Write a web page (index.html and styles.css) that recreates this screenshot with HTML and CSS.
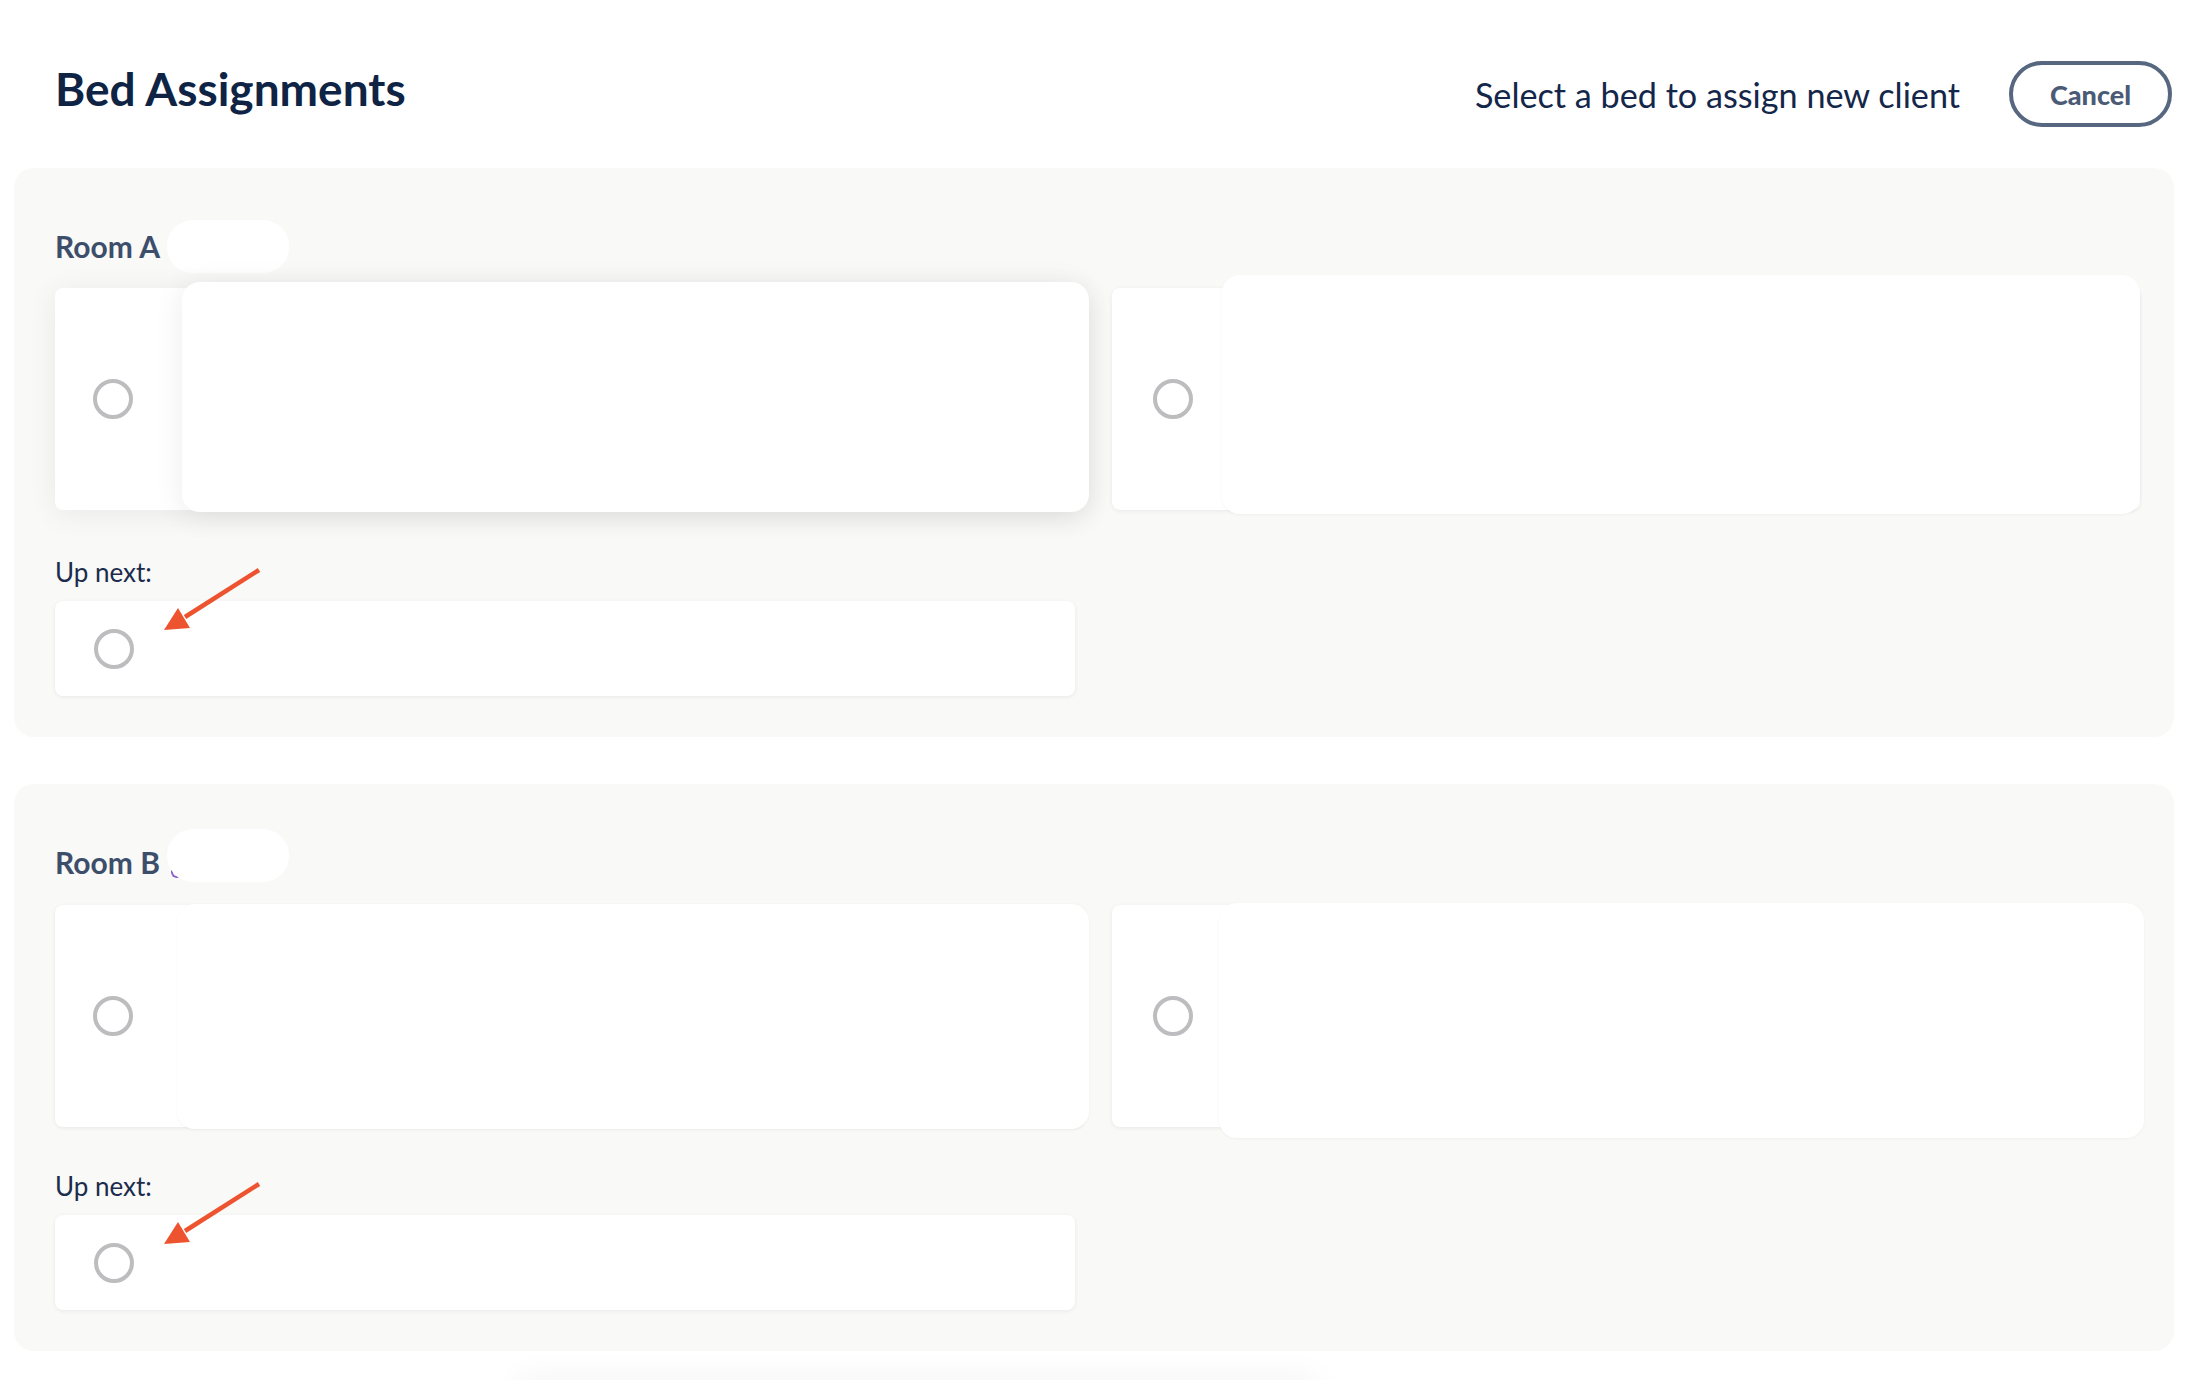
FILE: index.html
```html
<!DOCTYPE html>
<html lang="en">
<head>
  <meta charset="UTF-8" />
  <meta name="viewport" content="width=device-width, initial-scale=1" />
  <title>Bed Assignments</title>
  <link rel="stylesheet" href="styles.css">
</head>
<body>

  <div class="header">
    <h1 class="title">Bed Assignments</h1>
    <div class="actions">
      <span class="hint">Select a bed to assign new client</span>
      <button class="cancel">Cancel</button>
    </div>
  </div>

  <div class="rooms">

    <!-- Room A -->
    <div class="room room-a">
      <h2 class="room-title">Room A<span class="pill"></span></h2>
      <div class="beds">
        <div class="bed bed-active">
          <span class="radio"></span>
          <div class="mask mask-a1"></div>
        </div>
        <div class="bed">
          <span class="radio"></span>
          <div class="mask mask-a2"></div>
        </div>
      </div>
      <div class="next">
        <div class="next-label">Up next:</div>
        <div class="next-card">
          <span class="radio"></span>
          <svg class="arrow" width="120" height="80" viewBox="0 0 120 80">
            <line x1="104" y1="9" x2="30" y2="56" stroke="#ee5330" stroke-width="4.5" />
            <polygon points="9,69 23,47 35,67" fill="#ee5330" />
          </svg>
        </div>
      </div>
    </div>

    <!-- Room B -->
    <div class="room room-b">
      <h2 class="room-title">Room B<span class="mark"></span><span class="pill"></span></h2>
      <div class="beds">
        <div class="bed">
          <span class="radio"></span>
          <div class="mask mask-b1"></div>
        </div>
        <div class="bed">
          <span class="radio"></span>
          <div class="mask mask-b2"></div>
        </div>
      </div>
      <div class="next">
        <div class="next-label">Up next:</div>
        <div class="next-card">
          <span class="radio"></span>
          <svg class="arrow" width="120" height="80" viewBox="0 0 120 80">
            <line x1="104" y1="9" x2="30" y2="56" stroke="#ee5330" stroke-width="4.5" />
            <polygon points="9,69 23,47 35,67" fill="#ee5330" />
          </svg>
        </div>
      </div>
    </div>

  </div>

  <div class="ghost"></div>

</body>
</html>
```

FILE: styles.css
```css
body {
  margin: 0;
  padding: 0;
  font-family: Lato, 'Open Sans', sans-serif;
  background: #fff;
  color: #14274a;
  overflow: hidden;
}

/* === Cabeçalho === */
.header {
  display: flex;
  align-items: center;
  justify-content: space-between;
  padding: 61px 32px 0 55px;
  margin-bottom: 41px;
}

.title {
  margin: 0 0 10px 0;
  font-size: 46px;
  font-weight: 700;
  color: #0f2445;
  line-height: 1.2;
}

.actions {
  display: flex;
  align-items: center;
  gap: 49px;
}

.hint {
  font-size: 34.2px;
  color: #14274a;
}

.cancel {
  width: 163px;
  height: 66px;
  border: 4px solid #56677f;
  border-radius: 33px;
  background: #fff;
  font-family: inherit;
  font-size: 27px;
  font-weight: 900;
  color: #4b5b76;
  cursor: pointer;
}

/* === Quartos === */
.rooms {
  display: flex;
  flex-direction: column;
  gap: 47px;
  padding: 0 30px 0 14px;
}

.room {
  background: #f9f9f8;
  border-radius: 20px;
  padding: 60px 34px 41px 41px;
}

.room-title {
  position: relative;
  margin: 0;
  font-size: 30px;
  line-height: 36px;
  font-weight: 700;
  color: #3d4e6b;
}

.room-title .pill {
  position: absolute;
  left: 112px;
  top: -8px;
  width: 122px;
  height: 53px;
  border-radius: 26px;
  background: #fff;
}

.room-b .room-title .pill {
  top: -15px;
}

/* pedacinho roxo que aparece ao lado do Room B */
.room-title .mark {
  position: absolute;
  left: 116px;
  top: 26px;
  width: 6px;
  height: 6px;
  border-left: 2px solid #8a5cd0;
  border-bottom: 2px solid #8a5cd0;
  border-radius: 0 0 0 6px;
}

.beds {
  display: grid;
  grid-template-columns: 1fr 1fr;
  gap: 28px;
  margin-top: 24px;
}

.room-b .beds {
  margin-top: 25px;
}

.bed {
  position: relative;
  height: 222px;
  background: #fff;
  border-radius: 8px;
  display: flex;
  align-items: center;
  padding-left: 38px;
  box-shadow: 0 1px 4px rgba(0, 0, 0, 0.07);
}

.beds .bed + .bed {
  padding-left: 41px;
}

.bed-active {
  box-shadow: 0 4px 30px rgba(0, 0, 0, 0.07);
}

.radio {
  width: 40px;
  height: 40px;
  box-sizing: border-box;
  border: 4.5px solid #bdbdc0;
  border-radius: 50%;
  background: #fff;
}

/* blocos brancos por cima dos cartões */
.mask {
  position: absolute;
  background: #fff;
  border-radius: 18px;
  box-shadow: 0 1px 3px rgba(0, 0, 0, 0.04);
}

.mask-a1 { left: 127px; top: -6px; right: -5px; bottom: -2px; box-shadow: 0 4px 30px rgba(0, 0, 0, 0.08); }
.mask-a2 { left: 110px; top: -13px; right: 0; bottom: -4px; }
.mask-b1 { left: 122px; top: -1px; right: -5px; bottom: -2px; }
.mask-b2 { left: 107px; top: -2px; right: -4px; bottom: -11px; }

/* === Próximo === */
.next-label {
  margin-top: 46px;
  font-size: 26px;
  line-height: 32px;
  color: #1b2c4c;
}

.room-b .next-label {
  margin-top: 43px;
}

.next-card {
  position: relative;
  width: 1020px;
  height: 95px;
  margin-top: 13px;
  background: #fff;
  border-radius: 8px;
  display: flex;
  align-items: center;
  padding-left: 39px;
  box-sizing: border-box;
  box-shadow: 0 1px 4px rgba(0, 0, 0, 0.07);
}

.arrow {
  position: absolute;
  left: 100px;
  top: -40px;
}

.ghost {
  width: 790px;
  height: 20px;
  margin: 30px 0 0 523px;
  border-radius: 10px;
  box-shadow: 0 0 30px 8px rgba(0, 0, 0, 0.04);
}
```
